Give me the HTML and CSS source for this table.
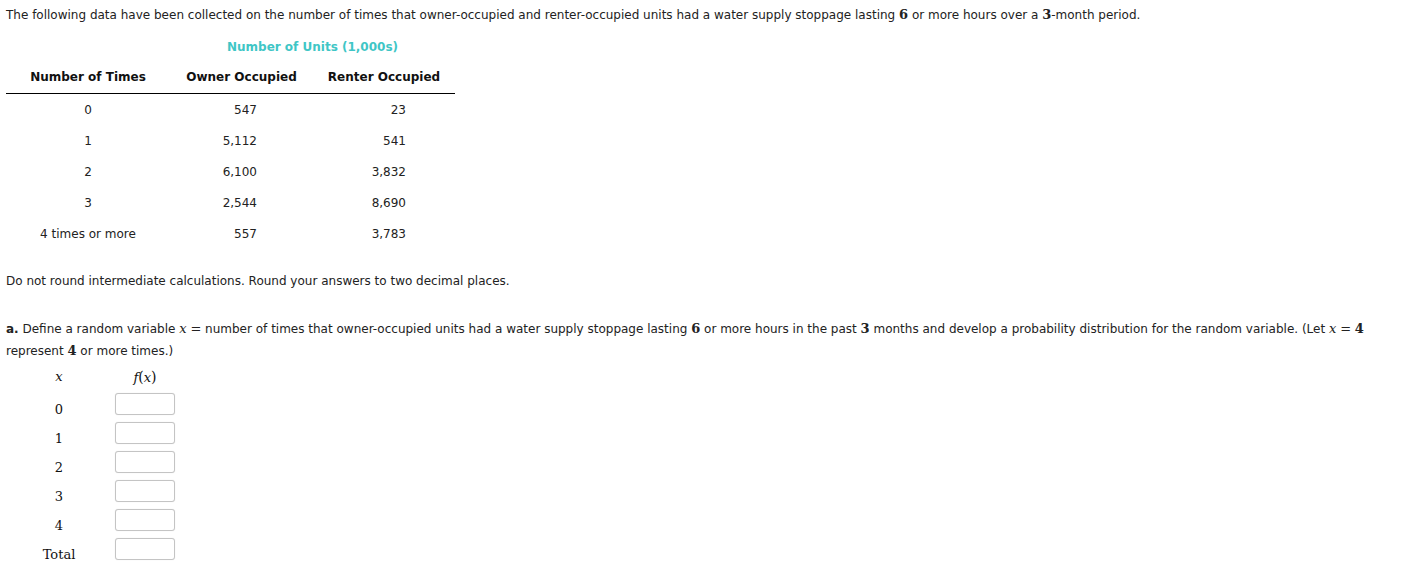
FILE: index.html
```html
<!DOCTYPE html>
<html>
<head>
<meta charset="utf-8">
<link rel="stylesheet" href="styles.css">
</head>
<body>
<div class="page">
  <p class="intro">The following data have been collected on the number of times that owner-occupied and renter-occupied units had a water supply stoppage lasting <span class="m">6</span> or more hours over a <span class="m">3</span>-month period.</p>

  <table class="data">
    <colgroup><col class="w1"><col class="w2"><col class="w3"></colgroup>
    <thead>
      <tr class="group"><th></th><th colspan="2">Number of Units (1,000s)</th></tr>
      <tr class="cols"><th>Number of Times</th><th>Owner Occupied</th><th>Renter Occupied</th></tr>
    </thead>
    <tbody>
      <tr><td class="c">0</td><td class="o">547</td><td class="r">23</td></tr>
      <tr><td class="c">1</td><td class="o">5,112</td><td class="r">541</td></tr>
      <tr><td class="c">2</td><td class="o">6,100</td><td class="r">3,832</td></tr>
      <tr><td class="c">3</td><td class="o">2,544</td><td class="r">8,690</td></tr>
      <tr><td class="c">4 times or more</td><td class="o">557</td><td class="r">3,783</td></tr>
    </tbody>
  </table>

  <p class="note">Do not round intermediate calculations. Round your answers to two decimal places.</p>

  <p class="question"><b>a.</b> Define a random variable <span class="mi">x</span> <span class="mo">=</span> number of times that owner-occupied units had a water supply stoppage lasting <span class="m">6</span> or more hours in the past <span class="m">3</span> months and develop a probability distribution for the random variable. (Let <span class="mi">x</span> <span class="mo">=</span> <span class="m">4</span><br>represent <span class="m">4</span> or more times.)</p>

  <div class="dist">
    <div class="dh"><span class="mi">x</span></div>
    <div class="dh"><span class="mi">f</span><span class="par">(</span><span class="mi">x</span><span class="par">)</span></div>
    <div class="dx">0</div><div class="df"><span class="box"></span></div>
    <div class="dx">1</div><div class="df"><span class="box"></span></div>
    <div class="dx">2</div><div class="df"><span class="box"></span></div>
    <div class="dx">3</div><div class="df"><span class="box"></span></div>
    <div class="dx">4</div><div class="df"><span class="box"></span></div>
    <div class="dx">Total</div><div class="df"><span class="box"></span></div>
  </div>
</div>
</body>
</html>
```

FILE: styles.css
```css
html, body {
  margin: 0;
  padding: 0;
  background: #fff;
}
.page {
  padding: 0 6px;
  font-family: "DejaVu Sans", Verdana, sans-serif;
  font-size: 12px;
  color: #222;
}
p { margin: 0; }
.intro {
  padding-top: 7px;
  line-height: 16px;
}
.m {
  font-family: "DejaVu Serif", "Liberation Serif", serif;
  font-weight: bold;
  font-size: 13px;
}
.mo {
  font-family: "DejaVu Serif", "Liberation Serif", serif;
  font-size: 13px;
}
.mi {
  font-family: "DejaVu Serif", "Liberation Serif", serif;
  font-style: italic;
  font-size: 13px;
}
.par { font-size: 14px; }

.data {
  border-collapse: collapse;
  margin-top: 14px;
  width: 449px;
  table-layout: fixed;
}
.data .w1 { width: 164px; }
.data .w2 { width: 143px; }
.data .w3 { width: 142px; }
.data th { font-weight: bold; color: #111; padding: 0; }
.data .group th {
  color: #3fc6c6;
  height: 20px;
  line-height: 20px;
  vertical-align: middle;
}
.data .cols th {
  line-height: 16px;
  padding: 12px 0 8px;
  border-bottom: 1px solid #000;
  vertical-align: middle;
}
.data td {
  height: 31px;
  padding: 0;
  vertical-align: middle;
}
.data .c { text-align: center; }
.data .o { text-align: right; padding-right: 56px; }
.data .r { text-align: right; padding-right: 49px; }

.note {
  margin-top: 24px;
  line-height: 16px;
}
.question {
  margin-top: 29px;
  line-height: 21px;
}

.dist {
  display: grid;
  grid-template-columns: 106px 66px;
  grid-auto-rows: 29px;
  grid-template-rows: 28px;
  margin-top: 1px;
  font-family: "DejaVu Serif", "Liberation Serif", serif;
  font-size: 13px;
  color: #111;
}
.dist .dh {
  text-align: center;
  line-height: 28px;
}
.dx {
  text-align: center;
  line-height: 20px;
  padding-top: 9px;
}
.df {
  display: flex;
  align-items: flex-start;
  justify-content: center;
  padding-top: 2px;
}
.box {
  display: block;
  width: 58px;
  height: 20px;
  border: 1px solid #c4c4c4;
  border-radius: 3px;
  box-shadow: 0 0 1px rgba(0,0,0,0.15);
  background: #fff;
}
```
